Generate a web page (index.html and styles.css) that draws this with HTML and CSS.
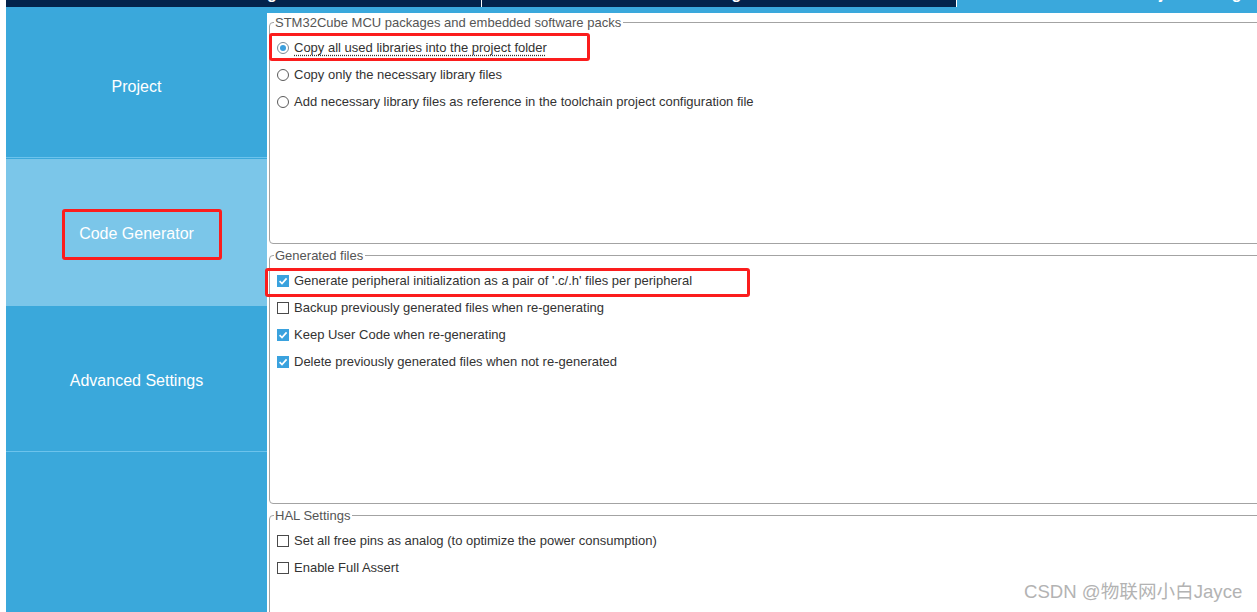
FILE: index.html
```html
<!DOCTYPE html>
<html lang="en">
<head>
<meta charset="utf-8">
<title>Project Manager - Code Generator</title>
<link rel="stylesheet" href="styles.css">
</head>
<body>
<div class="app">
  <div class="tabs">
    <div class="tab tab-1"><span class="tab-label">Pinout &amp; Configuration</span></div>
    <div class="tab tab-2"><span class="tab-label">Clock Configuration</span></div>
    <div class="tab tab-3 active"><span class="tab-label">Project Manager</span></div>
  </div>
  <div class="stripe"></div>
  <div class="main">
    <nav class="sidebar">
      <div class="item item-project">Project</div>
      <div class="item item-code selected">Code Generator</div>
      <div class="item item-adv">Advanced Settings</div>
      <div class="item item-rest"></div>
    </nav>
    <section class="panel">
      <fieldset class="group group-packs">
        <legend>STM32Cube MCU packages and embedded software packs</legend>
        <div class="rows">
          <div class="row"><span class="radio checked"></span><span class="label focused">Copy all used libraries into the project folder</span></div>
          <div class="row"><span class="radio"></span><span class="label">Copy only the necessary library files</span></div>
          <div class="row"><span class="radio"></span><span class="label">Add necessary library files as reference in the toolchain project configuration file</span></div>
        </div>
      </fieldset>
      <fieldset class="group group-files">
        <legend>Generated files</legend>
        <div class="rows">
          <div class="row"><span class="check checked"><svg viewBox="0 0 12 12" width="12" height="12"><path d="M2.6 6.2 L5 8.6 L9.6 3.4" fill="none" stroke="#fff" stroke-width="1.7"/></svg></span><span class="label">Generate peripheral initialization as a pair of '.c/.h' files per peripheral</span></div>
          <div class="row"><span class="check"></span><span class="label">Backup previously generated files when re-generating</span></div>
          <div class="row"><span class="check checked"><svg viewBox="0 0 12 12" width="12" height="12"><path d="M2.6 6.2 L5 8.6 L9.6 3.4" fill="none" stroke="#fff" stroke-width="1.7"/></svg></span><span class="label">Keep User Code when re-generating</span></div>
          <div class="row"><span class="check checked"><svg viewBox="0 0 12 12" width="12" height="12"><path d="M2.6 6.2 L5 8.6 L9.6 3.4" fill="none" stroke="#fff" stroke-width="1.7"/></svg></span><span class="label">Delete previously generated files when not re-generated</span></div>
        </div>
      </fieldset>
      <fieldset class="group group-hal">
        <legend>HAL Settings</legend>
        <div class="rows">
          <div class="row"><span class="check"></span><span class="label">Set all free pins as analog (to optimize the power consumption)</span></div>
          <div class="row"><span class="check"></span><span class="label">Enable Full Assert</span></div>
        </div>
      </fieldset>
    </section>
  </div>
  <div class="mark mark-1"></div>
  <div class="mark mark-2"></div>
  <div class="mark mark-3"></div>
  <div class="watermark">CSDN @物联网小白Jayce</div>
</div>
</body>
</html>
```

FILE: styles.css
```css
* { box-sizing: border-box; }
html, body { margin: 0; padding: 0; background: #fff; }
body {
  font-family: "Liberation Sans", Arial, sans-serif;
  overflow: hidden;
}
.app {
  position: relative;
  width: 1257px;
  height: 612px;
  padding-left: 6px;
  overflow: hidden;
}
.tabs {
  display: flex;
  height: 7px;
  overflow: hidden;
}
.tab {
  flex: none;
  width: 476px;
  height: 7px;
  background: #03234b;
  border-right: 1px solid #fff;
  overflow: hidden;
  text-align: center;
  color: #fff;
  font-weight: bold;
  font-size: 16px;
}
.tab-2 { width: 475px; }
.tab-3 { width: 475px; border-right: 0; }
.tab.active { background: #3aa8dc; }
.tab-label {
  display: block;
  line-height: 16px;
  margin-top: -14px;
  white-space: nowrap;
}
.stripe {
  height: 6px;
  background: #3aa8dc;
}
.main {
  display: flex;
  height: 599px;
}
.sidebar {
  flex: none;
  width: 261px;
  background: #3aa8db;
  display: flex;
  flex-direction: column;
}
.item {
  display: flex;
  align-items: center;
  justify-content: center;
  color: #fff;
  font-size: 16px;
}
.item-project {
  height: 145px;
  border-bottom: 1px solid #6cc3ec;
  margin-bottom: 1px;
  padding-top: 3px;
}
.item-code {
  height: 147px;
  background: #7bc6e9;
  padding-top: 2px;
}
.item-adv {
  height: 146px;
  border-bottom: 1px solid #6cc3ec;
  padding-top: 4px;
}
.item-rest { flex: 1; }
.panel {
  flex: 1;
  min-width: 0;
  overflow: hidden;
  padding: 2px 0 0 2px;
}
.group {
  width: calc(100% + 20px);
  margin: 0 0 4px 0;
  padding: 0 0 0 7px;
  border: 1px solid #a3a3a3;
  border-radius: 4px;
  min-width: 0;
}
.group legend {
  font-size: 13px;
  line-height: 12px;
  color: #555;
  padding: 2px 2px 0 1px;
  margin-left: -3px;
}
.group-packs { height: 229px; }
.group-files { height: 256px; }
.group-hal { height: 220px; }
.rows {
  padding-top: 5px;
  display: flex;
  flex-direction: column;
}
.row {
  height: 27px;
  display: flex;
  align-items: center;
  gap: 5px;
  font-size: 13px;
  color: #333;
  white-space: nowrap;
}
.label { line-height: 14px; }
.label.focused {
  text-decoration: underline dotted #333;
  text-underline-offset: 3px;
}
.radio {
  flex: none;
  width: 12px;
  height: 12px;
  border: 1px solid #5a5a5a;
  border-radius: 50%;
  background: #fff;
  display: flex;
  align-items: center;
  justify-content: center;
}
.radio.checked { border-color: #7a8a96; }
.radio.checked::after {
  content: "";
  width: 6px;
  height: 6px;
  border-radius: 50%;
  background: #3b9fdd;
}
.check {
  flex: none;
  width: 12px;
  height: 12px;
  border: 1px solid #4a4a4a;
  background: #fff;
  display: flex;
}
.check.checked {
  border: 0;
  background: #3aa2de;
}
.check svg { display: block; }
.mark {
  position: absolute;
  border: 3px solid #fb1d1d;
  border-radius: 3px;
}
.mark-1 { left: 269px; top: 33px; width: 321px; height: 28px; }
.mark-2 { left: 62px; top: 209px; width: 160px; height: 51px; }
.mark-3 { left: 265px; top: 268px; width: 485px; height: 29px; }
.watermark {
  position: absolute;
  left: 1024px;
  top: 581px;
  font-family: "Liberation Sans", "Noto Sans CJK SC", sans-serif;
  font-size: 18.6px;
  line-height: 22px;
  color: #b3b3b3;
  white-space: nowrap;
}
```
